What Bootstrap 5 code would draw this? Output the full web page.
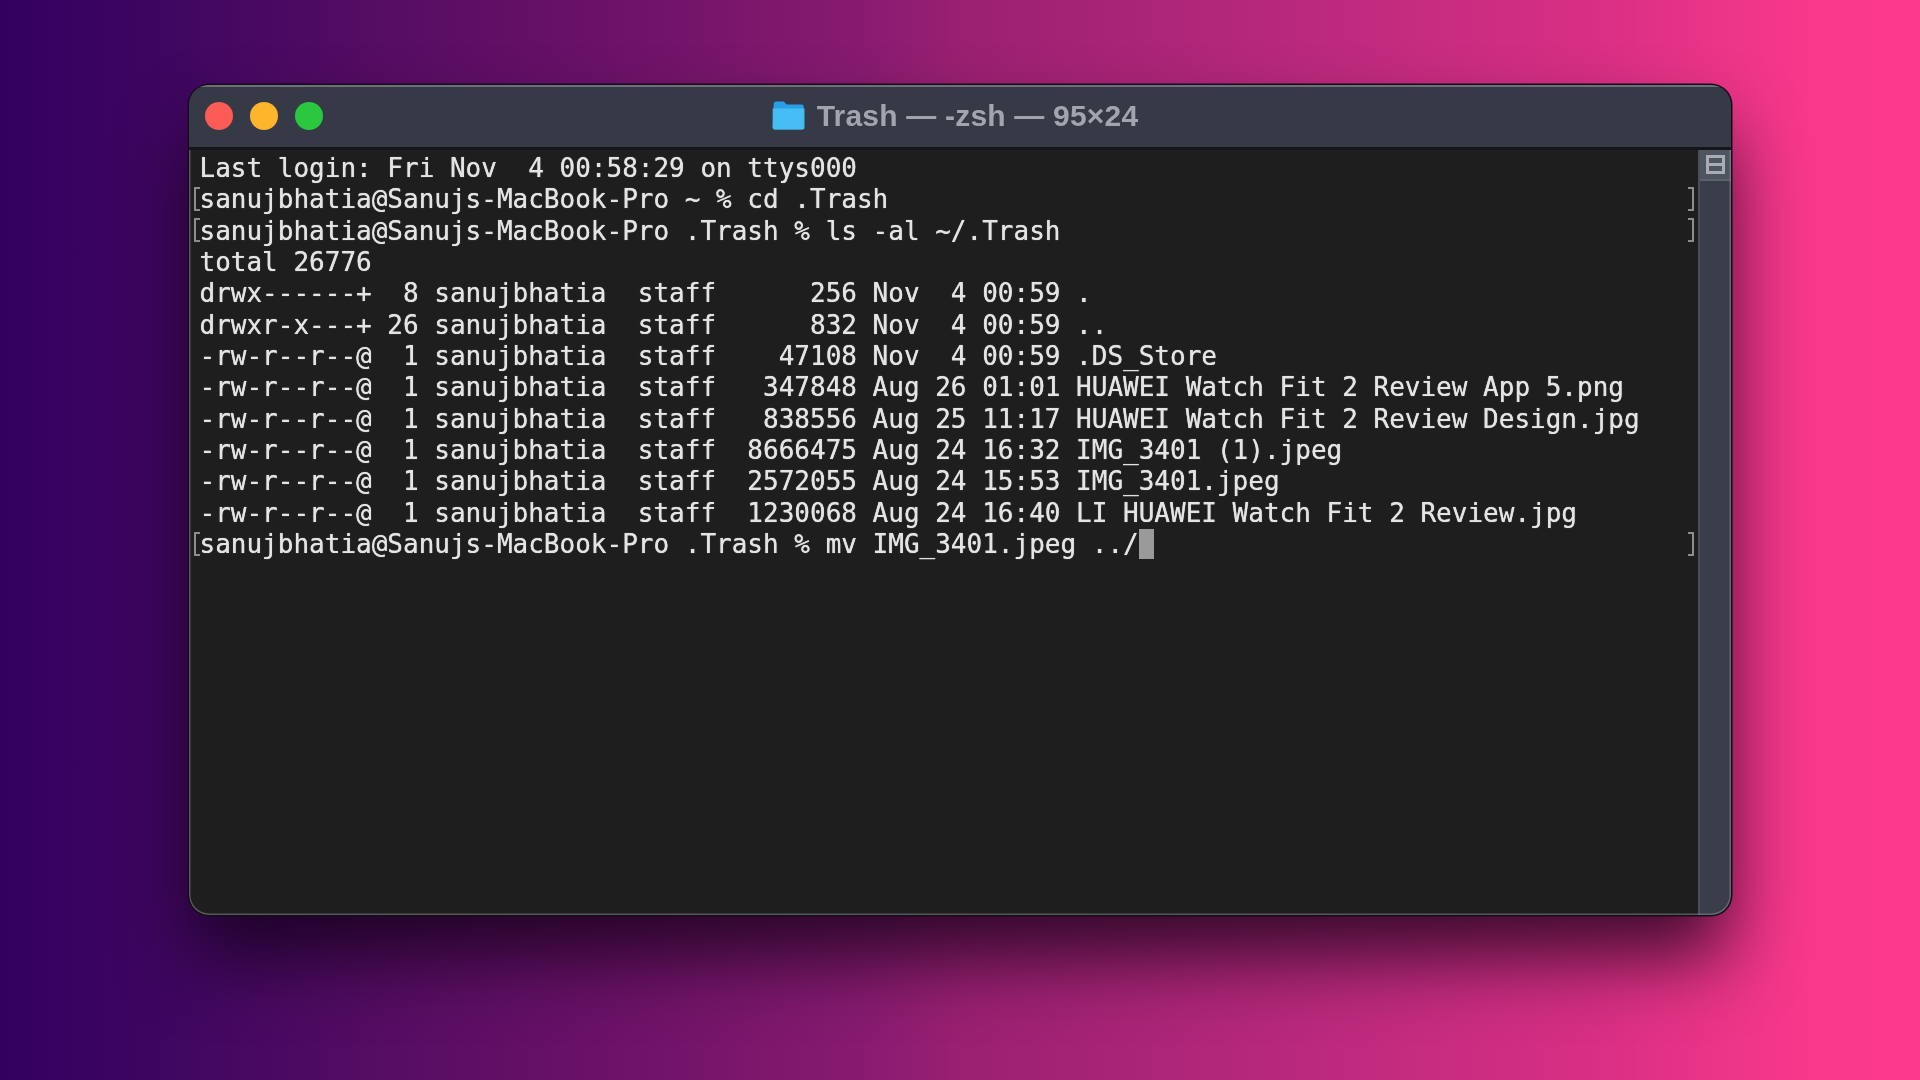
<!DOCTYPE html>
<html lang="en">
<head>
<meta charset="utf-8">
<title>Trash</title>
<link href="https://cdn.jsdelivr.net/npm/bootstrap@5.3.0/dist/css/bootstrap.min.css" rel="stylesheet">
<style>
html,body{height:100%}
body{height:1080px;overflow:hidden;padding:85px 189px 0 189px;background:linear-gradient(90deg,#330060 0%,#410761 10%,#540c63 19%,#6c1268 32%,#881b70 45%,#9a2072 50%,#a82476 58%,#be2a7e 70%,#d82f84 83%,#f8388b 94%,#fd398c 100%)}
.term-win{width:1542px;height:830px;border-radius:20px;background:#1e1e1e;box-shadow:0 0 0 1.5px #170c1c,0 45px 75px -4px rgba(15,0,20,.78);overflow:hidden;position:relative}
.term-bar{height:65px;flex:none;background:#363a46;border-top:2px solid #6d7076;border-bottom:3px solid #16161a;position:relative}
.tl{width:28px;height:28px;border-radius:50%}
.tl-r{background:#fd5b55}.tl-y{background:#feb52c}.tl-g{background:#2ac83f}
.lights{padding-left:16px;gap:17px;margin-top:-2px}
.term-title{font:700 30px/1 "Liberation Sans",sans-serif;color:#a2a5af;letter-spacing:.2px;gap:12px;filter:blur(.45px);margin-top:-2px;margin-left:-5px}
.term-text{padding:3px 0 0 3px;font:500 26px/31.35px "DejaVu Sans Mono",monospace;color:#e4e4e4;text-shadow:0 0 .8px #e4e4e4;filter:blur(.45px)}
.term-row{height:31.35px;white-space:pre}
.mk{flex:none;width:6px;height:24px;align-self:center;border:2px solid #8d8d8d;margin-top:-2px}
.mk-l{border-right:0;margin-left:1.5px}
.mk-s{flex:none;width:7.5px}
.mk-r{border-left:0;margin-right:4px}
.cursor{display:inline-block;width:15px;height:30px;background:#9a9a9a;vertical-align:top}
.side{width:33px;flex:none;background:#393e4a;border-left:2px solid #4c4f58}
.side-top{height:31px;background:#4f5461;border-bottom:2px solid #5c606b}
.side-ico{width:19px;height:19px;border:3px solid #a9acb5;background:linear-gradient(#a9acb5,#a9acb5) center/100% 3px no-repeat}
.win-edge{position:absolute;inset:0;border-radius:20px;box-shadow:inset 0 0 0 1.5px rgba(150,155,160,.45);pointer-events:none;clip-path:inset(65px 0 0 0)}
</style>
</head>
<body>
<div class="term-win d-flex flex-column">
  <div class="term-bar d-flex align-items-center">
    <div class="lights d-flex">
      <span class="tl tl-r"></span><span class="tl tl-y"></span><span class="tl tl-g"></span>
    </div>
    <div class="term-title d-flex align-items-center position-absolute top-50 start-50 translate-middle text-nowrap">
      <svg width="33" height="31" viewBox="0 0 33 31"><path d="M2 5a3 3 0 0 1 3-3h7l3 3h15a2 2 0 0 1 2 2v21a2 2 0 0 1-2 2H3a2 2 0 0 1-2-2z" fill="#2b9fe6"/><path d="M1 9h32v19a2 2 0 0 1-2 2H3a2 2 0 0 1-2-2z" fill="#47bdf5"/></svg>
      <span>Trash — -zsh — 95×24</span>
    </div>
  </div>
  <div class="term-body d-flex flex-grow-1">
    <div class="term-text flex-grow-1">
      <div class="term-row d-flex"><span class="mk-s"></span><span>Last login: Fri Nov  4 00:58:29 on ttys000</span></div>
      <div class="term-row d-flex"><span class="mk mk-l"></span><span>sanujbhatia@Sanujs-MacBook-Pro ~ % cd .Trash</span><span class="mk mk-r ms-auto"></span></div>
      <div class="term-row d-flex"><span class="mk mk-l"></span><span>sanujbhatia@Sanujs-MacBook-Pro .Trash % ls -al ~/.Trash</span><span class="mk mk-r ms-auto"></span></div>
      <div class="term-row d-flex"><span class="mk-s"></span><span>total 26776</span></div>
      <div class="term-row d-flex"><span class="mk-s"></span><span>drwx------+  8 sanujbhatia  staff      256 Nov  4 00:59 .</span></div>
      <div class="term-row d-flex"><span class="mk-s"></span><span>drwxr-x---+ 26 sanujbhatia  staff      832 Nov  4 00:59 ..</span></div>
      <div class="term-row d-flex"><span class="mk-s"></span><span>-rw-r--r--@  1 sanujbhatia  staff    47108 Nov  4 00:59 .DS_Store</span></div>
      <div class="term-row d-flex"><span class="mk-s"></span><span>-rw-r--r--@  1 sanujbhatia  staff   347848 Aug 26 01:01 HUAWEI Watch Fit 2 Review App 5.png</span></div>
      <div class="term-row d-flex"><span class="mk-s"></span><span>-rw-r--r--@  1 sanujbhatia  staff   838556 Aug 25 11:17 HUAWEI Watch Fit 2 Review Design.jpg</span></div>
      <div class="term-row d-flex"><span class="mk-s"></span><span>-rw-r--r--@  1 sanujbhatia  staff  8666475 Aug 24 16:32 IMG_3401 (1).jpeg</span></div>
      <div class="term-row d-flex"><span class="mk-s"></span><span>-rw-r--r--@  1 sanujbhatia  staff  2572055 Aug 24 15:53 IMG_3401.jpeg</span></div>
      <div class="term-row d-flex"><span class="mk-s"></span><span>-rw-r--r--@  1 sanujbhatia  staff  1230068 Aug 24 16:40 LI HUAWEI Watch Fit 2 Review.jpg</span></div>
      <div class="term-row d-flex"><span class="mk mk-l"></span><span>sanujbhatia@Sanujs-MacBook-Pro .Trash % mv IMG_3401.jpeg ../<span class="cursor"></span></span><span class="mk mk-r ms-auto"></span></div>
    </div>
    <div class="side">
      <div class="side-top d-flex align-items-center justify-content-center"><span class="side-ico"></span></div>
    </div>
  </div>
  <div class="win-edge"></div>
</div>
<script src="https://cdn.jsdelivr.net/npm/bootstrap@5.3.0/dist/js/bootstrap.bundle.min.js"></script>
</body>
</html>
